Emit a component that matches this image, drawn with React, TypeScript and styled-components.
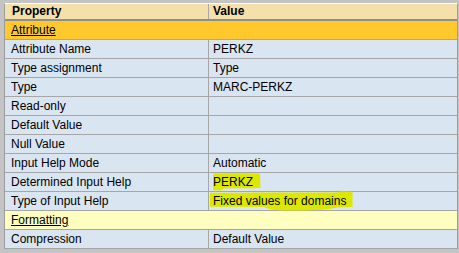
import React from 'react';
import styled, { createGlobalStyle } from 'styled-components';

const Global = createGlobalStyle`
  html, body { margin: 0; padding: 0; background: #c4c4c4; }
  body {
    font-family: "Liberation Sans", Arial, sans-serif;
    font-size: 12px;
    color: #000;
  }
`;

const Frame = styled.div`
  width: 459px;
  height: 253px;
  box-sizing: border-box;
  padding: 3px 1px 0 4px;
  overflow: hidden;
  background: #c4c4c4;
`;

const Table = styled.div`
  width: 454px;
  box-sizing: border-box;
  border-top: 1px solid #ffffff;
  border-left: 1px solid #9c9c9c;
  border-right: 1px solid #9c9c9c;
  background: #dae5f2;
`;

const HeaderRow = styled.div`
  display: grid;
  grid-template-columns: 204px 1fr;
  height: 15px;
  line-height: 15px;
  background: #f4e0ab;
  border-bottom: 2px solid #8e8e8e;
  font-weight: bold;
`;

const HeaderCell = styled.div<{ $divider?: boolean }>`
  box-sizing: border-box;
  padding-left: ${(p) => (p.$divider ? '7px' : '4px')};
  border-right: ${(p) => (p.$divider ? '1px solid #a8a8a8' : 'none')};
  white-space: nowrap;
`;

const SectionRow = styled.div<{ $bg: string }>`
  height: 18px;
  line-height: 18px;
  background: ${(p) => p.$bg};
  border-bottom: 1px solid #a6a6a6;
  padding-left: 6px;
`;

const SectionLink = styled.span`
  text-decoration: underline;
  text-underline-offset: 1px;
`;

const DataRow = styled.div`
  display: grid;
  grid-template-columns: 204px 1fr;
  height: 18px;
  line-height: 18px;
  border-bottom: 1px solid #a6a6a6;
  background: #dae5f2;
`;

const NameCell = styled.div`
  box-sizing: border-box;
  padding-left: 6px;
  border-right: 1px solid #a6a6a6;
  white-space: nowrap;
`;

const ValueCell = styled.div`
  position: relative;
  padding-left: 4px;
  white-space: nowrap;
`;

const ValueText = styled.span`
  position: relative;
  z-index: 1;
`;

const Highlight = styled.svg`
  position: absolute;
  left: 0;
  top: 0;
  overflow: visible;
  z-index: 0;
  pointer-events: none;
`;

type Row = { name: string; value?: string; mark?: string };

const marks: Record<string, { w: number; d: string }> = {
  short: {
    w: 52,
    d: 'M4 0.6 C 20 0.1, 38 0.2, 51 0.6 L 51.5 15 C 40 15.4, 26 15.1, 15 15.4 L 12 17.6 L 4 17.2 Z',
  },
  long: {
    w: 144,
    d: 'M1 0.8 C 40 0.6, 90 0.4, 128 0.6 L 132 -0.4 L 143.5 -0.2 L 143.6 15 L 128 15.4 C 120 17.5, 100 18.6, 80 18.6 C 65 18.6, 58 17, 55 15.1 L 1 14.8 Z',
  },
};

const attributeRows: Row[] = [
  { name: 'Attribute Name', value: 'PERKZ' },
  { name: 'Type assignment', value: 'Type' },
  { name: 'Type', value: 'MARC-PERKZ' },
  { name: 'Read-only' },
  { name: 'Default Value' },
  { name: 'Null Value' },
  { name: 'Input Help Mode', value: 'Automatic' },
  { name: 'Determined Input Help', value: 'PERKZ', mark: 'short' },
  { name: 'Type of Input Help', value: 'Fixed values for domains', mark: 'long' },
];

const formattingRows: Row[] = [{ name: 'Compression', value: 'Default Value' }];

const PropRow = ({ row }: { row: Row }) => {
  const m = row.mark ? marks[row.mark] : null;
  return (
    <DataRow>
      <NameCell>{row.name}</NameCell>
      <ValueCell>
        {m && (
          <Highlight width={m.w} height={18} viewBox={`0 0 ${m.w} 18`}>
            <path d={m.d} fill="#dde800" />
          </Highlight>
        )}
        <ValueText>{row.value ?? ''}</ValueText>
      </ValueCell>
    </DataRow>
  );
};

export default function App() {
  return (
    <>
      <Global />
      <Frame>
        <Table>
          <HeaderRow>
            <HeaderCell $divider>Property</HeaderCell>
            <HeaderCell>Value</HeaderCell>
          </HeaderRow>
          <SectionRow $bg="#ffc92e">
            <SectionLink>Attribute</SectionLink>
          </SectionRow>
          {attributeRows.map((r) => (
            <PropRow key={r.name} row={r} />
          ))}
          <SectionRow $bg="#ffffbf">
            <SectionLink>Formatting</SectionLink>
          </SectionRow>
          {formattingRows.map((r) => (
            <PropRow key={r.name} row={r} />
          ))}
        </Table>
      </Frame>
    </>
  );
}
